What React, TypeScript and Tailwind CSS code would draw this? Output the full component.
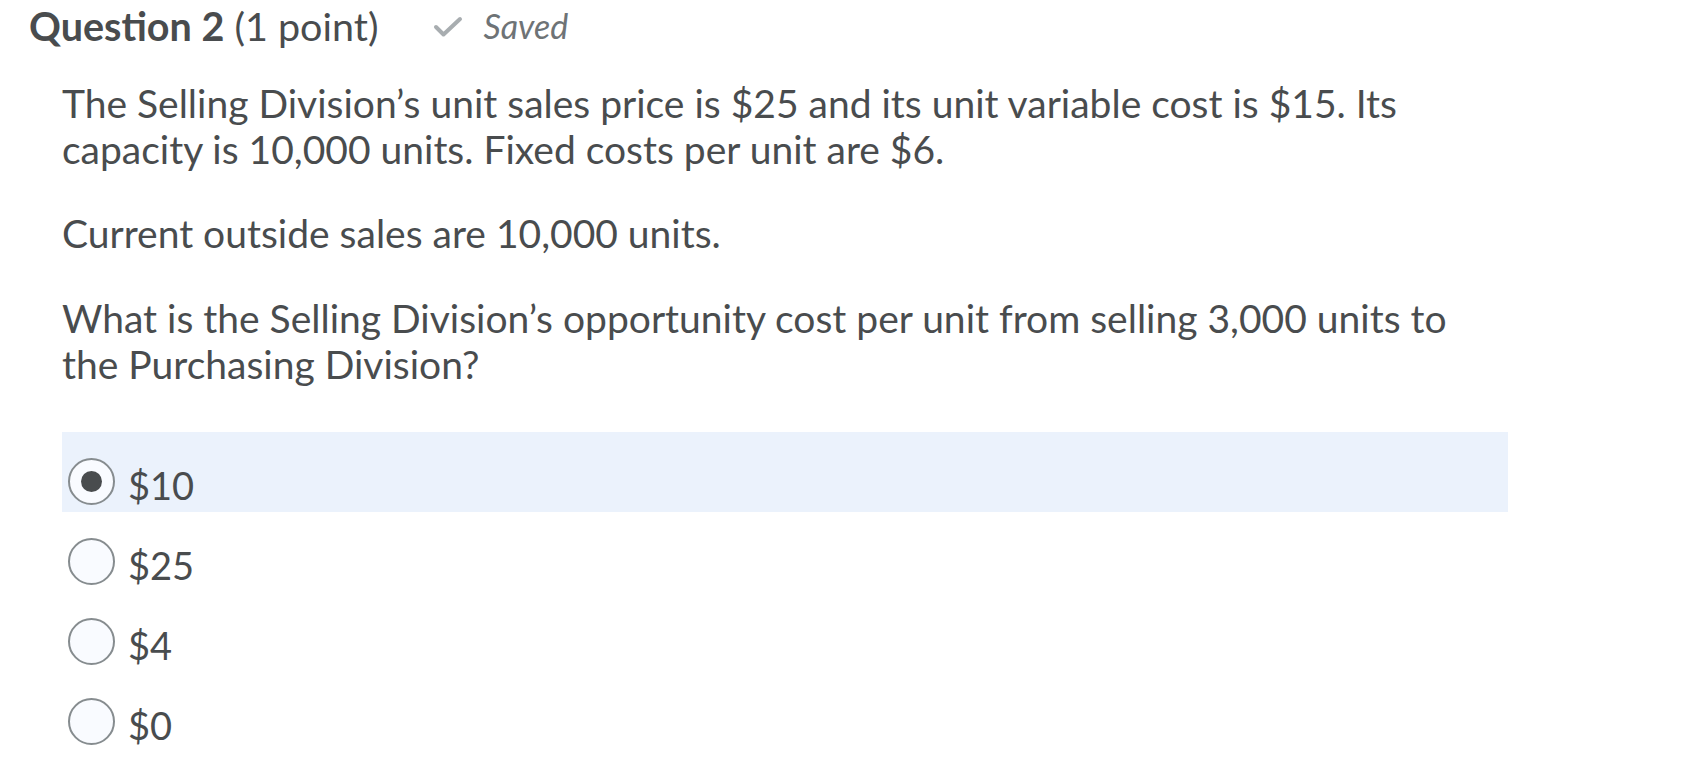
const options = ['$10', '$25', '$4', '$0'];

function Radio({ checked }: { checked: boolean }) {
  return (
    <span className="flex h-[47px] w-[47px] shrink-0 items-center justify-center rounded-full border-2 border-[#868c8f] bg-[#f9fbff]">
      {checked && <span className="h-[21px] w-[21px] rounded-full bg-[#494c4e]" />}
    </span>
  );
}

export default function App() {
  const selected = 0;

  return (
    <div className="h-[760px] w-[1708px] overflow-hidden bg-white font-['Lato','Noto_Sans',sans-serif] text-[#494c4e]">
      <div className="flex items-center pl-[29px] pt-[2px]">
        <h2 className="text-[39.5px] leading-[48px]">
          <span className="font-bold">Question 2</span> (1 point)
        </h2>
        <span className="ml-[55px] flex items-center gap-[20px] text-[#6e7376]">
          <svg width="30" height="22" viewBox="0 0 30 22" className="mt-[2px]">
            <polyline
              points="3,11 10.5,18.5 27,3"
              fill="none"
              stroke="#a8adb0"
              strokeWidth="4"
              strokeLinecap="round"
              strokeLinejoin="round"
            />
          </svg>
          <span className="text-[34px] italic leading-[48px]">Saved</span>
        </span>
      </div>

      <div className="pl-[62px]">
        <div className="w-[1420px] pt-[30px] text-[39px] leading-[46px]">
          <p>
            The Selling Division’s unit sales price is $25 and its unit variable cost is $15. Its
            capacity is 10,000 units. Fixed costs per unit are $6.
          </p>
          <p className="mt-[38px]">Current outside sales are 10,000 units.</p>
          <p className="mt-[39px]">
            What is the Selling Division’s opportunity cost per unit from selling 3,000 units to
            the Purchasing Division?
          </p>
        </div>

        <ul className="mt-[45px] w-[1446px]">
          {options.map((o, i) => (
            <li
              key={o}
              className={`flex h-[80px] items-center gap-[13px] pl-[6px] pt-[19px] ${
                i === selected ? 'bg-[#ebf2fc]' : ''
              }`}
            >
              <Radio checked={i === selected} />
              <span className="mt-[6px] text-[38px] leading-[46px]">{o}</span>
            </li>
          ))}
        </ul>
      </div>
    </div>
  );
}
